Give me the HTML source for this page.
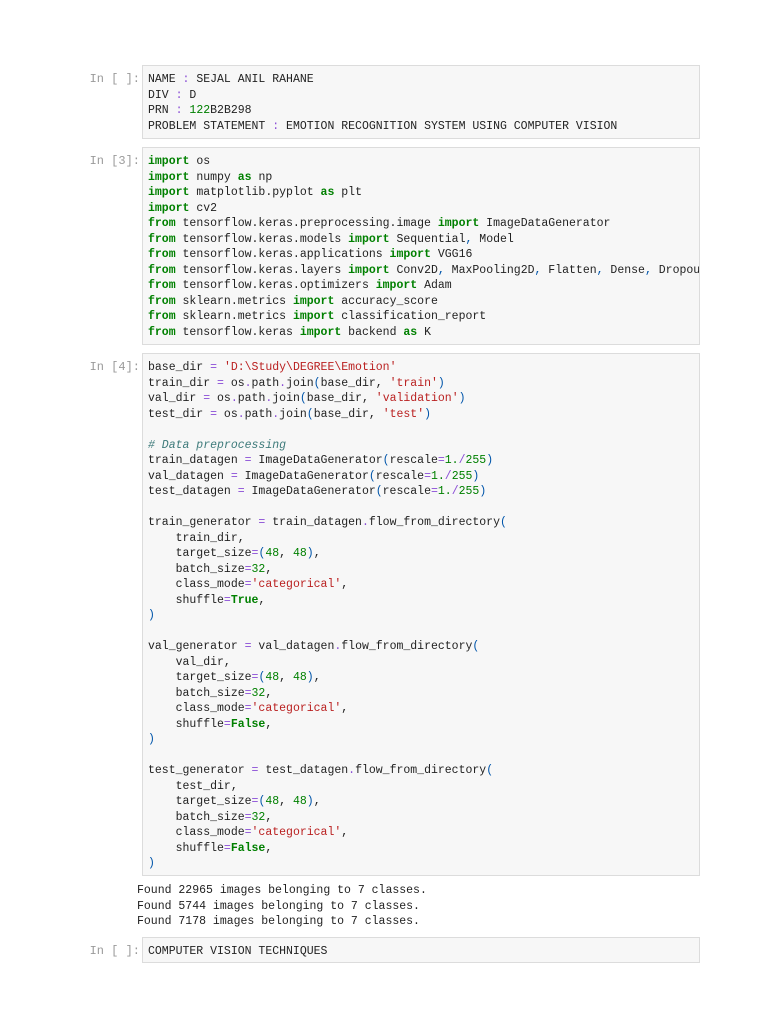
<!DOCTYPE html>
<html><head><meta charset="utf-8"><style>
body{margin:0;background:#fff;width:768px;height:1024px;position:relative;overflow:hidden;font-family:"Liberation Mono",monospace;font-size:11.5px;}
.p{position:absolute;left:60px;width:80px;text-align:right;color:#9a9a9a;line-height:15.5px;font-size:12px}
.c{position:absolute;left:142px;width:546px;background:#f7f7f7;border:1px solid #dcdcdc;padding:6px 5px 2px;overflow:hidden;}
pre{margin:0;font:inherit;line-height:15.5px;white-space:pre;color:#222;}
.k{color:#008000;font-weight:bold}.s{color:#ba2121}.n{color:#008000}.o{color:#8a4dd6}.b{color:#0055aa}.m{color:#3d7a7a;font-style:italic}
.out{position:absolute;left:137px;line-height:15.5px;color:#222;}
</style></head><body>
<div class="p" style="top:72px">In [ ]:</div>
<div class="c" style="top:65px;height:64px"><pre>NAME <span class="o">:</span> SEJAL ANIL RAHANE
DIV <span class="o">:</span> D
PRN <span class="o">:</span> <span class="n">122</span>B2B298
PROBLEM STATEMENT <span class="o">:</span> EMOTION RECOGNITION SYSTEM USING COMPUTER VISION</pre></div>

<div class="p" style="top:154px">In [3]:</div>
<div class="c" style="top:147px;height:188px"><pre><span class="k">import</span> os
<span class="k">import</span> numpy <span class="k">as</span> np
<span class="k">import</span> matplotlib.pyplot <span class="k">as</span> plt
<span class="k">import</span> cv2
<span class="k">from</span> tensorflow.keras.preprocessing.image <span class="k">import</span> ImageDataGenerator
<span class="k">from</span> tensorflow.keras.models <span class="k">import</span> Sequential<span class="b">,</span> Model
<span class="k">from</span> tensorflow.keras.applications <span class="k">import</span> VGG16
<span class="k">from</span> tensorflow.keras.layers <span class="k">import</span> Conv2D<span class="b">,</span> MaxPooling2D<span class="b">,</span> Flatten<span class="b">,</span> Dense<span class="b">,</span> Dropout
<span class="k">from</span> tensorflow.keras.optimizers <span class="k">import</span> Adam
<span class="k">from</span> sklearn.metrics <span class="k">import</span> accuracy_score
<span class="k">from</span> sklearn.metrics <span class="k">import</span> classification_report
<span class="k">from</span> tensorflow.keras <span class="k">import</span> backend <span class="k">as</span> K</pre></div>

<div class="p" style="top:360px">In [4]:</div>
<div class="c" style="top:353px;height:513px"><pre>base_dir <span class="o">=</span> <span class="s">'D:\Study\DEGREE\Emotion'</span>
train_dir <span class="o">=</span> os<span class="o">.</span>path<span class="o">.</span>join<span class="b">(</span>base_dir, <span class="s">'train'</span><span class="b">)</span>
val_dir <span class="o">=</span> os<span class="o">.</span>path<span class="o">.</span>join<span class="b">(</span>base_dir, <span class="s">'validation'</span><span class="b">)</span>
test_dir <span class="o">=</span> os<span class="o">.</span>path<span class="o">.</span>join<span class="b">(</span>base_dir, <span class="s">'test'</span><span class="b">)</span>

<span class="m"># Data preprocessing</span>
train_datagen <span class="o">=</span> ImageDataGenerator<span class="b">(</span>rescale<span class="o">=</span><span class="n">1.</span><span class="o">/</span><span class="n">255</span><span class="b">)</span>
val_datagen <span class="o">=</span> ImageDataGenerator<span class="b">(</span>rescale<span class="o">=</span><span class="n">1.</span><span class="o">/</span><span class="n">255</span><span class="b">)</span>
test_datagen <span class="o">=</span> ImageDataGenerator<span class="b">(</span>rescale<span class="o">=</span><span class="n">1.</span><span class="o">/</span><span class="n">255</span><span class="b">)</span>

train_generator <span class="o">=</span> train_datagen<span class="o">.</span>flow_from_directory<span class="b">(</span>
    train_dir,
    target_size<span class="o">=</span><span class="b">(</span><span class="n">48</span>, <span class="n">48</span><span class="b">)</span>,
    batch_size<span class="o">=</span><span class="n">32</span>,
    class_mode<span class="o">=</span><span class="s">'categorical'</span>,
    shuffle<span class="o">=</span><span class="k">True</span>,
<span class="b">)</span>

val_generator <span class="o">=</span> val_datagen<span class="o">.</span>flow_from_directory<span class="b">(</span>
    val_dir,
    target_size<span class="o">=</span><span class="b">(</span><span class="n">48</span>, <span class="n">48</span><span class="b">)</span>,
    batch_size<span class="o">=</span><span class="n">32</span>,
    class_mode<span class="o">=</span><span class="s">'categorical'</span>,
    shuffle<span class="o">=</span><span class="k">False</span>,
<span class="b">)</span>

test_generator <span class="o">=</span> test_datagen<span class="o">.</span>flow_from_directory<span class="b">(</span>
    test_dir,
    target_size<span class="o">=</span><span class="b">(</span><span class="n">48</span>, <span class="n">48</span><span class="b">)</span>,
    batch_size<span class="o">=</span><span class="n">32</span>,
    class_mode<span class="o">=</span><span class="s">'categorical'</span>,
    shuffle<span class="o">=</span><span class="k">False</span>,
<span class="b">)</span></pre></div>

<div class="out" style="top:883px"><pre>Found 22965 images belonging to 7 classes.
Found 5744 images belonging to 7 classes.
Found 7178 images belonging to 7 classes.</pre></div>

<div class="p" style="top:944px">In [ ]:</div>
<div class="c" style="top:937px;height:16px"><pre>COMPUTER VISION TECHNIQUES</pre></div>
</body></html>
